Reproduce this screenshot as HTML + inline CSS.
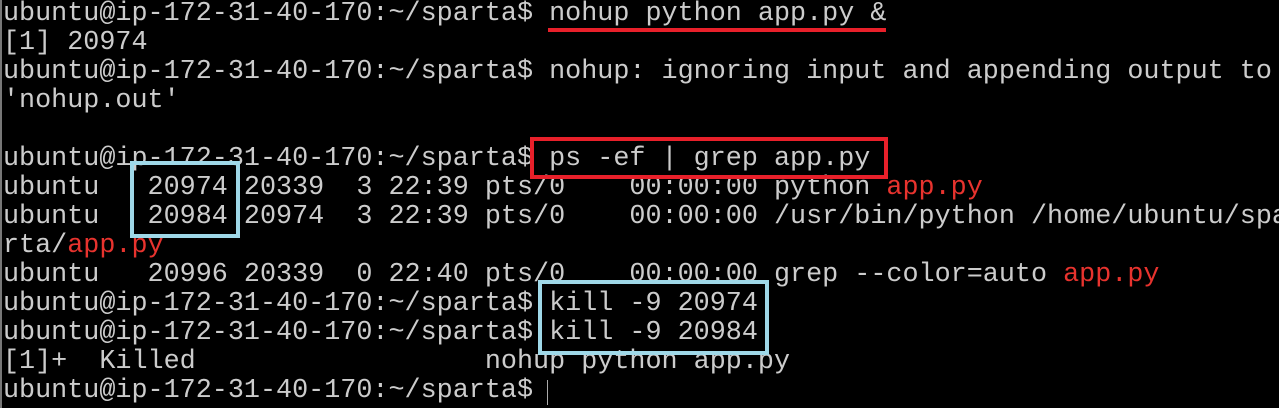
<!DOCTYPE html>
<html><head><style>
html,body{margin:0;padding:0;background:#000;}
body{width:1279px;height:408px;overflow:hidden;position:relative;}
pre{position:absolute;left:3px;top:0;margin:0;font-family:"Liberation Mono",monospace;font-size:26.77px;line-height:29px;color:#cccccc;white-space:pre;}
.r{color:#e8332e;}
.lb{position:absolute;left:0;top:0;width:2px;height:408px;background:#777;}
.box{position:absolute;box-sizing:border-box;}
</style></head><body>
<div class="lb"></div>
<pre>ubuntu@ip-172-31-40-170:~/sparta$ nohup python app.py &amp;
[1] 20974
ubuntu@ip-172-31-40-170:~/sparta$ nohup: ignoring input and appending output to
'nohup.out'

ubuntu@ip-172-31-40-170:~/sparta$ ps -ef | grep app.py
ubuntu   20974 20339  3 22:39 pts/0    00:00:00 python <span class="r">app.py</span>
ubuntu   20984 20974  3 22:39 pts/0    00:00:00 /usr/bin/python /home/ubuntu/spa
rta/<span class="r">app.py</span>
ubuntu   20996 20339  0 22:40 pts/0    00:00:00 grep --color=auto <span class="r">app.py</span>
ubuntu@ip-172-31-40-170:~/sparta$ kill -9 20974
ubuntu@ip-172-31-40-170:~/sparta$ kill -9 20984
[1]+  Killed                  nohup python app.py
ubuntu@ip-172-31-40-170:~/sparta$ </pre>
<div class="box" style="left:547px;top:380px;width:1px;height:25px;background:#aaa;"></div>
<div class="box" style="left:548px;top:28px;width:338px;height:4px;background:#e8202a;"></div>
<div class="box" style="left:530px;top:137px;width:358px;height:42px;border:4px solid #e8202a;"></div>
<div class="box" style="left:130px;top:161px;width:110px;height:77px;border:4px solid #9fd8e8;"></div>
<div class="box" style="left:538px;top:280px;width:231px;height:75px;border:4px solid #9fd8e8;"></div>
</body></html>
